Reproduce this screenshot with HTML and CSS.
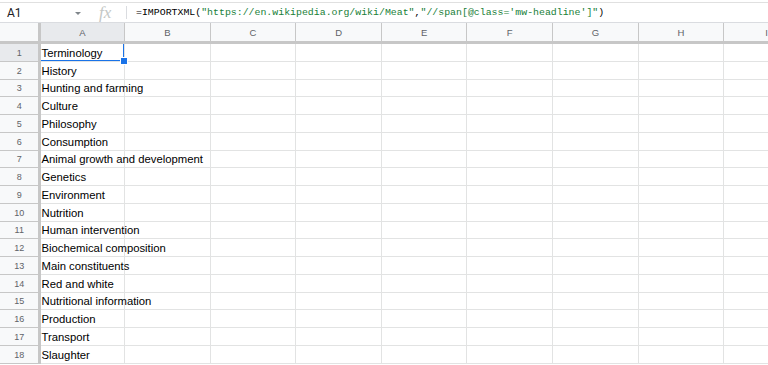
FILE: index.html
```html
<!DOCTYPE html>
<html lang="en">
<head>
  <meta charset="UTF-8" />
  <title>Sheet</title>
  <link rel="stylesheet" href="styles.css">
</head>
<body>

  <div class="formula-bar">
    <div class="name-box">
      <span class="cell-ref">A1</span>
      <span class="caret"></span>
    </div>
    <div class="fx">fx</div>
    <div class="divider"></div>
    <div class="formula">=IMPORTXML(<span class="str">"https://en.wikipedia.org/wiki/Meat"</span>,<span class="str">"//span[@class='mw-headline']"</span>)</div>
  </div>

  <table class="grid">
    <colgroup>
      <col class="col-rownum">
      <col class="col-cell" span="9">
    </colgroup>
    <thead>
      <tr>
        <th class="corner"></th>
        <th class="selected">A</th>
        <th>B</th>
        <th>C</th>
        <th>D</th>
        <th>E</th>
        <th>F</th>
        <th>G</th>
        <th>H</th>
        <th>I</th>
      </tr>
    </thead>
    <tbody id="rows"></tbody>
  </table>

  <script>
    const items = [
      "Terminology", "History", "Hunting and farming", "Culture", "Philosophy",
      "Consumption", "Animal growth and development", "Genetics", "Environment",
      "Nutrition", "Human intervention", "Biochemical composition", "Main constituents",
      "Red and white", "Nutritional information", "Production", "Transport", "Slaughter"
    ];

    const body = document.getElementById("rows");
    items.forEach((text, i) => {
      const tr = document.createElement("tr");
      const num = document.createElement("td");
      num.className = "rownum" + (i === 0 ? " selected" : "");
      num.textContent = i + 1;
      tr.appendChild(num);
      for (let c = 0; c < 9; c++) {
        const td = document.createElement("td");
        if (c === 0) {
          td.textContent = text;
          if (i === 0) td.className = "active";
        }
        tr.appendChild(td);
      }
      body.appendChild(tr);
    });
  </script>

</body>
</html>
```

FILE: styles.css
```css
:root {
  --grid-line: #e2e3e3;
  --header-bg: #f8f9fa;
  --header-sel: #e8eaed;
  --header-text: #5f6368;
  --blue: #1a73e8;
  --green: #188038;
}

body {
  margin: 0;
  background: #fff;
  font-family: Arial, "Liberation Sans", sans-serif;
  overflow: hidden;
}

.formula-bar {
  display: flex;
  align-items: center;
  height: 19px;
  margin-top: 2px;
  border-top: 1px solid #e0e0e0;
  border-bottom: 1px solid #dadce0;
}

.name-box {
  display: flex;
  align-items: center;
  width: 88px;
  padding-left: 7px;
  box-sizing: border-box;
}

.cell-ref {
  font-family: Roboto, "Liberation Sans", sans-serif;
  font-size: 12px;
  color: #202124;
  flex: 1;
}

.caret {
  width: 0;
  height: 0;
  border-left: 3px solid transparent;
  border-right: 3px solid transparent;
  border-top: 3px solid #80868b;
  margin-right: 7px;
  margin-top: 2px;
}

.fx {
  font-family: "Liberation Serif", serif;
  font-style: italic;
  font-size: 17px;
  color: #c4c7c5;
  width: 38px;
  padding-left: 11px;
  box-sizing: border-box;
  line-height: 19px;
}

.divider {
  width: 1px;
  height: 13px;
  background: #dadce0;
  margin-right: 9px;
}

.formula {
  font-family: "Liberation Mono", monospace;
  font-size: 9.9px;
  color: #000;
  white-space: nowrap;
}

.str {
  color: var(--green);
}

.grid {
  border-collapse: collapse;
  table-layout: fixed;
  width: 809.4px;
}

.col-rownum {
  width: 39px;
}

.col-cell {
  width: 85.6px;
}

.grid th {
  height: 18px;
  padding: 0;
  background: var(--header-bg);
  border-right: 1px solid #c7c7c7;
  border-bottom: 3px solid #c7c7c7;
  font-weight: normal;
  font-size: 9.5px;
  color: var(--header-text);
  text-align: center;
}

.grid th.corner {
  border-right: 3px solid #c7c7c7;
}

.grid th.selected,
.grid td.rownum.selected {
  background: var(--header-sel);
}

.grid td {
  height: 15.76px;
  padding: 1px 0 0 1px;
  border-right: 1px solid var(--grid-line);
  border-bottom: 1px solid var(--grid-line);
  font-size: 11.3px;
  color: #000;
  white-space: nowrap;
  overflow: visible;
}

.grid td.rownum {
  background: var(--header-bg);
  border-right: 3px solid #c7c7c7;
  border-bottom: 1px solid #c7c7c7;
  color: var(--header-text);
  font-size: 9px;
  text-align: center;
  padding: 1px 0 0 1px;
}

.grid td.active {
  position: relative;
  box-shadow: inset -1px -1px 0 var(--blue);
}

.grid td.active::after {
  content: "";
  position: absolute;
  right: -4px;
  bottom: -4px;
  width: 6px;
  height: 6px;
  background: var(--blue);
  border: 1px solid #fff;
  z-index: 1;
}
```
